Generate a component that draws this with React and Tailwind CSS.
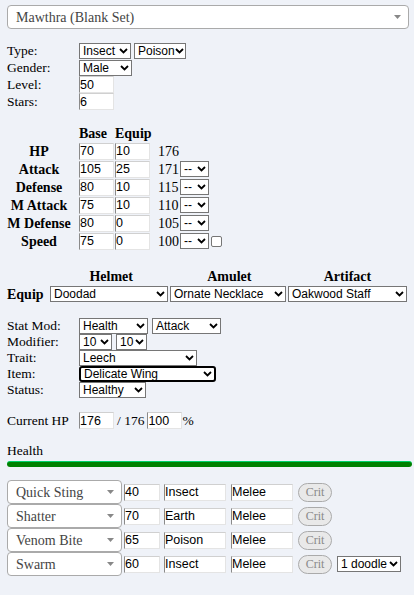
import React from 'react'

const serif = "font-['Liberation_Serif',serif]"
const sans = "font-['Liberation_Sans',Arial,sans-serif]"

// native-looking select, drawn with a div so the size stays fixed
function Sel({ value, w, className = 'border border-[#767676]' }) {
  return (
    <div
      className={`${sans} ${w} h-[16px] shrink-0 flex items-center justify-between bg-white text-[12px] leading-none text-black pl-[3px] pr-[2px] ${className}`}
    >
      <span className="whitespace-nowrap">{value}</span>
      <svg width="9" height="6" viewBox="0 0 9 6" className="shrink-0">
        <path d="M1 1 L4.5 4.5 L8 1" stroke="#000" strokeWidth="1.8" fill="none" />
      </svg>
    </div>
  )
}

function Inp({ value, w = 'w-[35px]' }) {
  return (
    <input
      defaultValue={value}
      className={`${sans} ${w} h-[17px] shrink-0 text-[12.5px] leading-none text-black bg-white px-0 border border-[#e4e4e4] border-l-[#8a8a8a] border-t-[#d0d0d0] outline-none`}
    />
  )
}

function Row({ label, children }) {
  return (
    <div className="flex items-center h-[17px]">
      <div className="w-[72px] shrink-0">{label}</div>
      <div className="flex items-center gap-[3px]">{children}</div>
    </div>
  )
}

const stats = [
  ['HP', '70', '10', '176', false, false],
  ['Attack', '105', '25', '171', true, false],
  ['Defense', '80', '10', '115', true, false],
  ['M Attack', '75', '10', '110', true, false],
  ['M Defense', '80', '0', '105', true, false],
  ['Speed', '75', '0', '100', true, true],
]

const moves = [
  ['Quick Sting', '40', 'Insect', 'Melee'],
  ['Shatter', '70', 'Earth', 'Melee'],
  ['Venom Bite', '65', 'Poison', 'Melee'],
  ['Swarm', '60', 'Insect', 'Melee'],
]

function Fancy({ label, w, h, text }) {
  return (
    <div
      className={`${w} ${h} shrink-0 flex items-center justify-between bg-white border border-[#aaa] rounded-[4px] pl-[8px] pr-[7px] ${text} text-[#444]`}
    >
      <span>{label}</span>
      <svg width="7" height="4" viewBox="0 0 7 4">
        <path d="M0 0 L7 0 L3.5 4 Z" fill="#888" />
      </svg>
    </div>
  )
}

export default function App() {
  return (
    <div className={`${serif} min-h-[595px] bg-[#eff2f8] text-[13.5px] text-black pt-[5px] px-[7px] leading-[17px]`}>
      <Fancy label="Mawthra (Blank Set)" w="w-[402px]" h="h-[24px]" text="text-[14px]" />

      <div className="mt-[13px]">
        <Row label="Type:">
          <Sel value="Insect" w="w-[52px]" />
          <Sel value="Poison" w="w-[52px]" />
        </Row>
        <Row label="Gender:">
          <Sel value="Male" w="w-[53px]" />
        </Row>
        <Row label="Level:">
          <Inp value="50" />
        </Row>
        <Row label="Stars:">
          <Inp value="6" />
        </Row>
      </div>

      <div className="mt-[14px] text-[14px]">
        <div className="flex items-center h-[18px] font-bold">
          <div className="w-[72px]" />
          <div className="w-[36px]">Base</div>
          <div className="w-[36px]">Equip</div>
        </div>
        {stats.map(([name, base, eq, total, sel, chk]) => (
          <div key={name} className="flex items-center h-[18px]">
            <div className="w-[64px] text-center font-bold mr-[8px] whitespace-nowrap">{name}</div>
            <Inp value={base} />
            <div className="w-[1px]" />
            <Inp value={eq} />
            <div className="ml-[8px] w-[22px]">{total}</div>
            {sel && <Sel value="--" w="w-[29px]" />}
            {chk && (
              <span className="ml-[2px] w-[11px] h-[11px] rounded-[2px] border border-[#767676] bg-white" />
            )}
          </div>
        ))}
      </div>

      <div className="mt-[17px] text-[14px]">
        <div className="flex items-center h-[18px] font-bold">
          <div className="w-[45px]" />
          <div className="w-[120px] text-center">Helmet</div>
          <div className="w-[118px] text-center">Amulet</div>
          <div className="w-[120px] text-center">Artifact</div>
        </div>
        <div className="flex items-center h-[18px] gap-[2px]">
          <div className="w-[43px] font-bold">Equip</div>
          <Sel value="Doodad" w="w-[118px]" />
          <Sel value="Ornate Necklace" w="w-[116px]" />
          <Sel value="Oakwood Staff" w="w-[119px]" />
        </div>
      </div>

      <div className="mt-[15px] leading-[16px]">
        <div className="flex items-center h-[16px]">
          <div className="w-[72px]">Stat Mod:</div>
          <div className="flex gap-[4px]">
            <Sel value="Health" w="w-[69px]" />
            <Sel value="Attack" w="w-[69px]" />
          </div>
        </div>
        <div className="flex items-center h-[16px]">
          <div className="w-[72px]">Modifier:</div>
          <div className="flex gap-[4px]">
            <Sel value="10" w="w-[33px]" />
            <Sel value="10" w="w-[31px]" />
          </div>
        </div>
        <div className="flex items-center h-[16px]">
          <div className="w-[72px]">Trait:</div>
          <Sel value="Leech" w="w-[118px]" />
        </div>
        <div className="flex items-center h-[16px]">
          <div className="w-[72px]">Item:</div>
          <Sel value="Delicate Wing" w="w-[137px]" className="border-2 border-black rounded-[3px] pl-[2px] pr-[1px]" />
        </div>
        <div className="flex items-center h-[16px]">
          <div className="w-[72px]">Status:</div>
          <Sel value="Healthy" w="w-[67px]" />
        </div>
      </div>

      <div className="mt-[14px] flex items-center h-[17px]">
        <div className="w-[72px]">Current HP</div>
        <Inp value="176" />
        <span className="mx-[3px]">/ 176</span>
        <Inp value="100" />
        <span>%</span>
      </div>

      <div className="mt-[13px]">Health</div>
      <div className="mt-[2px] h-[6px] w-[405px] rounded-full bg-[#008000] border-t border-[#00d26a]" />

      <div className="mt-[13px] flex flex-col">
        {moves.map(([name, pow, type, cat], i) => (
          <div key={name} className="flex items-center h-[24px]">
            <Fancy label={name} w="w-[115px]" h="h-[24px]" text="text-[14px]" />
            <div className="ml-[2px]">
              <Inp value={pow} w="w-[36px]" />
            </div>
            <div className="ml-[4px]">
              <Inp value={type} w="w-[62px]" />
            </div>
            <div className="ml-[5px]">
              <Inp value={cat} w="w-[62px]" />
            </div>
            <button className="ml-[5px] w-[34px] h-[19px] rounded-full border border-[#aaa] bg-[#e9e9e9] text-[12px] text-[#888] leading-none">
              Crit
            </button>
            {i === 3 && <Sel value="1 doodle" w="w-[64px]" className="ml-[5px] border border-[#767676]" />}
          </div>
        ))}
      </div>
    </div>
  )
}
